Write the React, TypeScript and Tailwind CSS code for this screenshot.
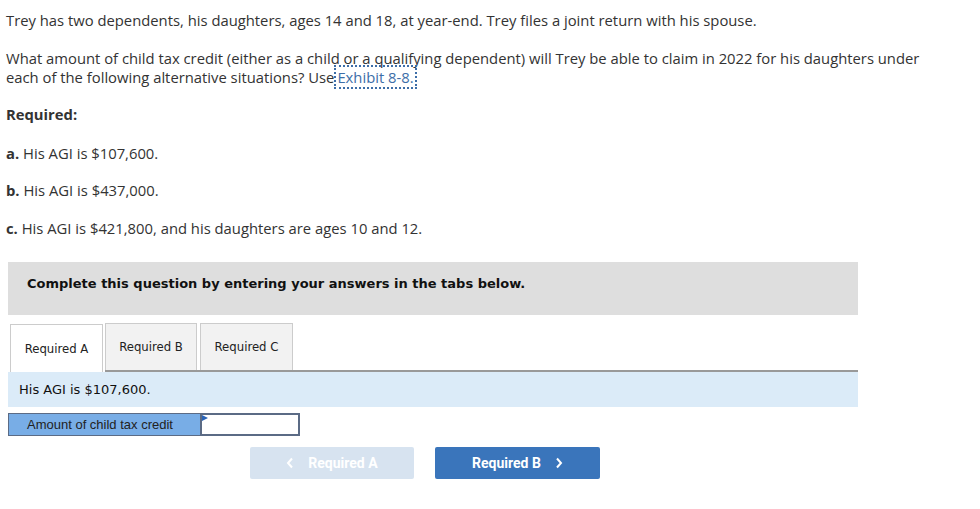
export default function App() {
  return (
    <div className="min-h-[509px] w-[980px] bg-white pl-[6px] pt-[11px] text-[#333] [font-family:'Open_Sans',Lato,sans-serif]">
      <p className="text-[14.8px] leading-[19px]">
        Trey has two dependents, his daughters, ages 14 and 18, at year-end. Trey files a joint return with his spouse.
      </p>
      <p className="mt-[19px] text-[14.8px] leading-[19px]">
        What amount of child tax credit (either as a child or a qualifying dependent) will Trey be able to claim in 2022 for his daughters under
        <br />
        each of the following alternative situations? Use
        <span className="border-2 border-dotted border-[#3d6ea8] px-[1px] text-[#3d6ea8]">Exhibit 8-8.</span>
      </p>
      <p className="mt-[18px] text-[14.8px] font-bold leading-[19px]">Required:</p>
      <p className="mt-[20px] text-[14.8px] leading-[19px]">
        <b>a.</b> His AGI is $107,600.
      </p>
      <p className="mt-[18px] text-[14.8px] leading-[19px]">
        <b>b.</b> His AGI is $437,000.
      </p>
      <p className="mt-[19px] text-[14.8px] leading-[19px]">
        <b>c.</b> His AGI is $421,800, and his daughters are ages 10 and 12.
      </p>

      <div className="ml-[2px] mt-[24px] flex h-[53px] w-[850px] items-center bg-[#dedede] pb-[9px] pl-[19px] text-[13px] font-bold text-[#111] [font-family:'DejaVu_Sans',sans-serif]">
        Complete this question by entering your answers in the tabs below.
      </div>

      <div className="ml-[2px] mt-[9px] flex w-[850px] items-end">
        <div className="ml-[2px] flex h-[48px] w-[93px] items-center justify-center border border-b-0 border-[#ccc] bg-white text-[13px] text-[#222] [font-family:'DejaVu_Sans_Condensed',sans-serif]">
          Required A
        </div>
        <div className="ml-[2px] flex h-[47px] flex-1 items-end border-b-2 border-[#999]">
          <div className="flex h-[47px] w-[92px] items-center justify-center border border-b-0 border-[#ccc] bg-[#f2f2f2] text-[13px] text-[#222] [font-family:'DejaVu_Sans_Condensed',sans-serif]">
            Required B
          </div>
          <div className="ml-[3px] flex h-[47px] w-[93px] items-center justify-center border border-b-0 border-[#ccc] bg-[#f2f2f2] text-[13px] text-[#222] [font-family:'DejaVu_Sans_Condensed',sans-serif]">
            Required C
          </div>
        </div>
      </div>

      <div className="ml-[2px] flex h-[35px] w-[850px] items-center bg-[#dbebf8] pl-[11px] text-[13px] text-[#111] [font-family:'DejaVu_Sans',sans-serif]">
        His AGI is $107,600.
      </div>

      <div className="ml-[2px] mt-[6px] flex h-[23px]">
        <div className="flex w-[192px] items-center border border-r-0 border-[#5b6b85] bg-[#78ade6] pl-[18px] text-[13px] text-[#222] [font-family:'Liberation_Sans',sans-serif]">
          Amount of child tax credit
        </div>
        <div className="relative w-[100px] border-2 border-[#5b6b85] bg-white">
          <svg className="absolute left-0 top-0" width="6" height="6" viewBox="0 0 6 6">
            <path d="M0 0 L6 3 L0 6 Z" fill="#2a64b8" />
          </svg>
        </div>
      </div>

      <div className="ml-[244px] mt-[11px] flex gap-[21px] [font-family:Roboto,sans-serif]">
        <div className="flex h-[32px] w-[164px] items-center justify-center gap-[14px] rounded-[2px] bg-[#d7e3f0] text-[14px] font-bold text-white">
          <svg width="8" height="12" viewBox="0 0 8 12">
            <path d="M6 1.5 L2 6 L6 10.5" fill="none" stroke="white" strokeWidth="2" />
          </svg>
          Required A
        </div>
        <div className="flex h-[32px] w-[165px] items-center justify-center gap-[14px] rounded-[2px] bg-[#3a75bb] text-[14px] font-bold text-white">
          Required B
          <svg width="8" height="12" viewBox="0 0 8 12">
            <path d="M2 1.5 L6 6 L2 10.5" fill="none" stroke="white" strokeWidth="2" />
          </svg>
        </div>
      </div>
    </div>
  );
}
